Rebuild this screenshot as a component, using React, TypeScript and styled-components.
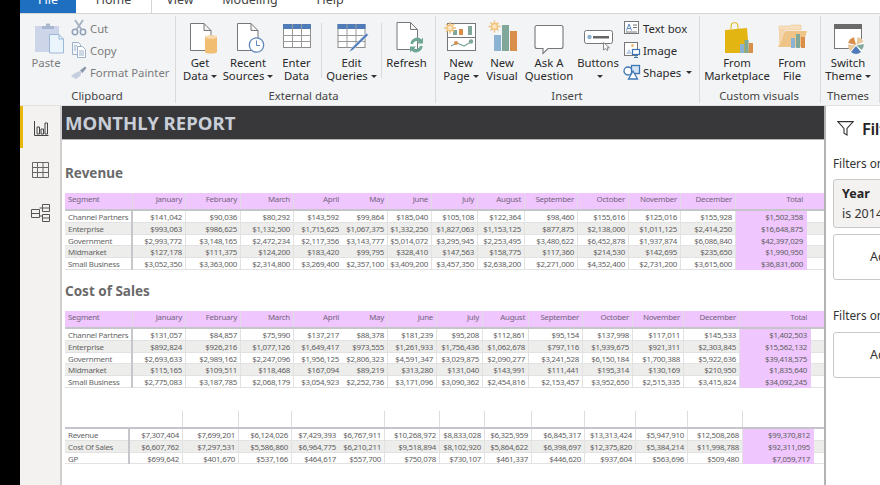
import React from "react";
import styled, { createGlobalStyle } from "styled-components";

const Global = createGlobalStyle`
  html, body { margin: 0; padding: 0; background: #000; }
  #root { width: 880px; height: 485px; overflow: hidden; }
  * { box-sizing: border-box; }
`;

const FONT = `"Noto Sans", "Open Sans", sans-serif`;

const Shell = styled.div`
  width: 880px; height: 485px; overflow: hidden;
  padding-left: 20px; background: #000;
  font-family: ${FONT}; display: flex; flex-direction: column;
`;
const TabBar = styled.div`
  height: 14px; flex: none; display: flex; align-items: flex-end; overflow: hidden;
  background: #fff; border-bottom: 1px solid #d4d4d4;
`;
const Tab = styled.div<{ $w: number; $kind?: "file" | "active" }>`
  flex: 0 0 ${p => p.$w}px; height: 22px; margin-bottom: -1px; text-align: center;
  font-size: 12.5px; line-height: 16px;
  color: ${p => (p.$kind === "file" ? "#fff" : "#444")};
  background: ${p => (p.$kind === "file" ? "#1e6fc0" : "#fff")};
  border-right: ${p => (p.$kind === "active" ? "1px solid #d4d4d4" : "none")};
`;
const Ribbon = styled.div`
  height: 92px; flex: none; display: flex; padding: 2px 0 2px;
  background: #f3f4f6; border-bottom: 1px solid #e2e2e2;
`;
const Group = styled.section<{ $w: number; $pl?: number }>`
  flex: 0 0 ${p => p.$w}px; display: flex; flex-direction: column;
  border-right: 1px solid #dadada; padding-left: ${p => p.$pl ?? 0}px;
`;
const GroupBody = styled.div`
  flex: 1; display: flex; align-items: flex-start;
`;
const GroupLabel = styled.div<{ $shift?: number }>`
  height: 14px; line-height: 14px; font-size: 11.3px; color: #444; text-align: center;
  margin-left: ${p => p.$shift ?? 0}px;
`;
const BigButton = styled.div<{ $w: number; $muted?: boolean }>`
  flex: 0 0 ${p => p.$w}px; width: ${p => p.$w}px; padding-top: 4px;
  display: flex; flex-direction: column; align-items: center;
  font-size: 11.3px; line-height: 13px; text-align: center;
  color: ${p => (p.$muted ? "#7b7b7b" : "#2a2a2a")};
  svg { display: block; }
`;
const ButtonLabel = styled.div`
  white-space: nowrap;
`;
const Caret = styled.span`
  display: inline-block; width: 0; height: 0; margin-left: 3px; vertical-align: 2px;
  border-left: 3px solid transparent; border-right: 3px solid transparent; border-top: 3px solid #333;
`;
const Divider = styled.div`
  flex: 0 0 1px; height: 55px; margin-top: 7px; background: #dadada;
`;
const SmallColumn = styled.div<{ $ml?: number }>`
  display: flex; flex-direction: column; padding-top: 1px; margin-left: ${p => p.$ml ?? 0}px;
`;
const SmallItem = styled.div<{ $muted?: boolean }>`
  display: flex; align-items: center; gap: 2px; height: 22px; white-space: nowrap;
  font-size: 11.3px; color: ${p => (p.$muted ? "#7b7b7b" : "#2a2a2a")};
`;
const Main = styled.div`
  flex: 1; display: flex; min-height: 0;
`;
const Sidebar = styled.nav`
  flex: 0 0 42px; background: #f3f2f1; border-right: 2px solid #cfcfcf;
  display: flex; flex-direction: column;
`;
const NavItem = styled.div<{ $active?: boolean }>`
  height: 42px; display: flex; align-items: center; justify-content: center;
  border-left: 3px solid ${p => (p.$active ? "#e8b70b" : "transparent")};
  padding: 2px 2px 0 0;
`;
const Canvas = styled.main`
  flex: 0 0 762px; background: #fff; display: flex; flex-direction: column;
`;
const Banner = styled.header`
  height: 34px; flex: none; background: #38383a; border-bottom: 1px solid #b5b5b5;
  padding-left: 3px; font-size: 18.6px; font-weight: 700; line-height: 34px; color: #c9ced8;
`;
const Report = styled.div`
  padding-left: 3px;
`;
const SectionTitle = styled.h2<{ $mt: number }>`
  margin: ${p => p.$mt}px 0 11px; height: 18px; font-size: 13.5px; line-height: 18px;
  font-weight: 700; color: #6a6a6a;
`;
const Grid = styled.div<{ $mt?: number }>`
  margin-top: ${p => p.$mt ?? 0}px; font-size: 7.9px; letter-spacing: -0.25px; color: #5e5e5e;
`;
const HeadRow = styled.div<{ $cols: string; $plain?: boolean }>`
  display: grid; grid-template-columns: ${p => p.$cols}; height: 18px;
  background: ${p => (p.$plain ? "#fff" : "#efc6fd")};
  border-bottom: 2px solid #c4c4ca;
`;
const HeadCell = styled.div<{ $left?: boolean; $bare?: boolean }>`
  text-align: ${p => (p.$left ? "left" : "right")}; line-height: 12px; padding: 0 3px;
  color: #75657d; white-space: nowrap;
  border-right: 1px solid ${p => (p.$bare ? "transparent" : "#e0dae2")};
`;
const DataRow = styled.div<{ $cols: string; $shade?: boolean }>`
  display: grid; grid-template-columns: ${p => p.$cols}; height: 11.8px;
  background: ${p => (p.$shade ? "#ededeb" : "#fff")};
  box-shadow: inset 0 -1px 0 #e2e2e2;
`;
const SegCell = styled.div`
  padding-left: 3px; line-height: 13px; height: 11.8px; white-space: nowrap; overflow: hidden;
  border-right: 2px solid #c6c6cb; color: #666;
`;
const ValueCell = styled.div<{ $total?: boolean; $bare?: boolean }>`
  text-align: right; line-height: 13px; height: 11.8px; padding-right: 3px; white-space: nowrap;
  background: ${p => (p.$total ? "#efc6fd" : "transparent")};
  border-right: 1px solid ${p => (p.$total || p.$bare ? "transparent" : "#e2e2e2")};
`;
const Panel = styled.aside`
  flex: 0 0 280px; background: #fff; border-left: 2px solid #b3b3b3; padding-left: 7px;
  color: #333;
`;
const PanelTitle = styled.div`
  display: flex; align-items: center; gap: 8px; height: 34px; margin-top: 5px; padding-left: 4px;
  font-size: 16.5px; font-weight: 600; letter-spacing: -0.4px; color: #252525;
`;
const PanelHeading = styled.div<{ $mt: number }>`
  margin-top: ${p => p.$mt}px; height: 18px; line-height: 18px; font-size: 11.8px; color: #333;
`;
const FilterCard = styled.div`
  margin-top: 7px; width: 230px; height: 49px; padding: 4px 8px;
  background: #f3f2f1; border: 1px solid #c8c8c8; border-radius: 3px;
  font-size: 12.5px; line-height: 20px; color: #333;
  b { display: block; font-weight: 700; color: #252525; }
`;
const AddCard = styled.div<{ $mt: number }>`
  margin-top: ${p => p.$mt}px; width: 230px; height: 46px; line-height: 44px; padding-left: 36px;
  background: #fff; border: 1px solid #c8c8c8; border-radius: 3px;
  font-size: 12.5px; color: #333; white-space: nowrap;
`;

const Icon36 = ({ children }: { children: React.ReactNode }) => (
  <svg width="36" height="36" viewBox="0 0 36 36" fill="none">{children}</svg>
);
const Icon18 = ({ children }: { children: React.ReactNode }) => (
  <svg width="18" height="18" viewBox="0 0 18 18" fill="none">{children}</svg>
);
const Doc = ({ x = 8, y = 3, bottom = 31 }: { x?: number; y?: number; bottom?: number }) => (
  <path d={`M${x + .5} ${y + .5}H${x + 14}L${x + 21} ${y + 7.5}V${bottom - .5}H${x + .5}ZM${x + 14} ${y + .5}V${y + 7.5}H${x + 21}`} fill="#fff" stroke="#777" />
);
const Sun = ({ x, y }: { x: number; y: number }) => (
  <g stroke="#f0c27b" strokeWidth="1.3">
    <path d={`M${x} ${y - 6}V${y + 6}M${x - 6} ${y}H${x + 6}M${x - 4} ${y - 4}L${x + 4} ${y + 4}M${x - 4} ${y + 4}L${x + 4} ${y - 4}`} />
    <circle cx={x} cy={y} r="3" fill="#fbe6c4" />
  </g>
);

const PasteIcon = () => (
  <Icon36>
    <rect x="7" y="6" width="24" height="26" fill="#cdd6e8" />
    <path d="M14 6h4v-2.500h4V6h4v3H14z" fill="#a9b6cf" />
    <path d="M21.500 14.500H31l4.500 4.500v14H21.500z" fill="#eaf4fc" stroke="#9db8d6" />
    <path d="M31 14.500V19h4.500" stroke="#9db8d6" />
  </Icon36>
);
const CutIcon = () => (
  <Icon18>
    <circle cx="5" cy="13" r="2.700" stroke="#8fa2ba" strokeWidth="1.500" />
    <circle cx="13" cy="13" r="2.700" stroke="#8fa2ba" strokeWidth="1.500" />
    <path d="M6.500 10.500L13 1M11.500 10.500L5 1" stroke="#a6b2c2" strokeWidth="1.800" />
  </Icon18>
);
const CopyIcon = () => (
  <Icon18>
    <path d="M2.500 1.500h6l2 2v10h-8z" fill="#f3f6fb" stroke="#9db0c8" />
    <path d="M7.500 5.500h5l3 3v8h-8z" fill="#fff" stroke="#9db0c8" />
    <path d="M9 10h5M9 12h5M9 14h5M4 5h3M4 7h2M4 9h2" stroke="#9db0c8" />
  </Icon18>
);
const BrushIcon = () => (
  <Icon18>
    <path d="M10 8l-6 2.500-3 3 2 1 1.500-.5-.5 1.500 2.500.5 4-3.500 1-3z" fill="#c5cfe0" />
    <path d="M10 7.500l2.500 2.500 4-5-1.500-1.500z" fill="#8b98ab" />
  </Icon18>
);
const GetDataIcon = () => (
  <Icon36>
    <Doc />
    <path d="M23 17c0-2 12-2 12 0v15c0 2-12 2-12 0z" fill="#f0bd72" />
    <ellipse cx="29" cy="17" rx="6" ry="1.800" fill="#f8dcaf" />
  </Icon36>
);
const RecentIcon = () => (
  <Icon36>
    <Doc x={7} />
    <circle cx="26.500" cy="25" r="7.200" fill="#fff" stroke="#5d87bb" strokeWidth="1.300" />
    <path d="M26.500 20.500V25.500H30" stroke="#5d87bb" />
  </Icon36>
);
const Sheet = ({ x, y, w = 28, h = 24 }: { x: number; y: number; w?: number; h?: number }) => (
  <g>
    <rect x={x + .5} y={y + .5} width={w - 1} height={h - 1} fill="#fff" stroke="#8d8d8d" />
    <rect x={x} y={y} width={w} height="5" fill="#4f7cb8" />
    <path d={`M${x} ${y + 11.500}H${x + w}M${x} ${y + 17.500}H${x + w}M${x + 9.500} ${y}V${y + h}M${x + 18.500} ${y}V${y + h}`} stroke="#9a9a9a" />
  </g>
);
const EnterIcon = () => <Icon36><Sheet x={4} y={4} /></Icon36>;
const EditIcon = () => (
  <Icon36>
    <Sheet x={3.500} y={4} />
    <path d="M32.500 13l-15 15-3 4.500 4.500-2.500 15.500-15z" fill="#4f7cb8" stroke="#fff" strokeWidth=".6" />
  </Icon36>
);
const RefreshIcon = () => (
  <Icon36>
    <Doc x={7.500} y={2} bottom={30} />
    <path d="M21.500 24a6.500 6.500 0 0 1 11-4.500l1.500-2v6h-6l2-1.800a4 4 0 0 0-6 2.300z" fill="#6fa593" />
    <path d="M33.500 26a6.500 6.500 0 0 1-11 4.500l-1.500 2v-6h6l-2 1.800a4 4 0 0 0 6-2.300z" fill="#6fa593" />
  </Icon36>
);
const NewPageIcon = () => (
  <Icon36>
    <rect x="4.500" y="3.500" width="28" height="27" fill="#fff" stroke="#777" />
    <path d="M4 17.500H33" stroke="#777" />
    <rect x="16" y="9" width="4" height="6" fill="#d98f4b" />
    <rect x="25" y="6" width="4" height="9" fill="#7fa89b" />
    <rect x="10" y="10" width="4" height="5" fill="#7fa89b" />
    <path d="M8 26l6-3 7 3 7-4" stroke="#7fa89b" strokeWidth="1.200" />
    <circle cx="13" cy="23" r="2" fill="#d98f4b" />
    <circle cx="28" cy="21.500" r="2.200" fill="#7fa89b" />
    <Sun x={7} y={8} />
  </Icon36>
);
const NewVisualIcon = () => (
  <Icon36>
    <rect x="10" y="15" width="7" height="16" fill="#8bb1d3" />
    <rect x="18" y="5" width="7" height="26" fill="#7fa89b" />
    <rect x="26" y="11" width="7" height="20" fill="#d98f4b" />
    <Sun x={10.500} y={6.500} />
  </Icon36>
);
const AskIcon = () => (
  <Icon36>
    <path d="M6 5.500h24a2 2 0 0 1 2 2v19a2 2 0 0 1-2 2H17l-5 5v-5H6a2 2 0 0 1-2-2v-19a2 2 0 0 1 2-2z" fill="#fff" stroke="#777" strokeWidth="1.100" />
  </Icon36>
);
const ButtonsIcon = () => (
  <Icon36>
    <rect x="4.500" y="10.500" width="28" height="13" rx="2" fill="#fff" stroke="#777" />
    <circle cx="9.500" cy="17" r="2.200" fill="#8bb1d3" />
    <rect x="13" y="16" width="16" height="2.500" fill="#666" />
    <path d="M23.500 22.500v7.500l2-1.500 1.500 2 1-.5-1-2.200h2.500z" fill="#fff" stroke="#888" />
  </Icon36>
);
const MarketIcon = () => (
  <Icon36>
    <path d="M12 9V6a3.500 3.500 0 0 1 7 0v3" stroke="#e3b512" strokeWidth="1" />
    <path d="M6 10l22-2 2 25H6z" fill="#e3b512" />
    <rect x="21" y="24" width="4" height="9" fill="#8bb1d3" />
    <rect x="25.500" y="20" width="4" height="13" fill="#7fa89b" />
    <rect x="30" y="23" width="4" height="10" fill="#d98f4b" />
  </Icon36>
);
const FolderIcon = () => (
  <Icon36>
    <path d="M5 6h10l3-1h9v5H5z" fill="#f7dfbd" stroke="#eccb9a" strokeWidth=".6" />
    <path d="M4 27L11 11h22l-5 16z" fill="#efc488" />
    <path d="M5 27V9h6L8 20z" fill="#f5d6aa" />
    <rect x="17" y="18" width="4" height="10" fill="#8bb1d3" />
    <rect x="22" y="14" width="4" height="14" fill="#7fa89b" />
    <rect x="27" y="17" width="4" height="11" fill="#d98f4b" />
  </Icon36>
);
const ThemeIcon = () => (
  <Icon36>
    <rect x="4.500" y="4.500" width="27" height="24" fill="#fff" stroke="#777" />
    <rect x="4" y="4" width="28" height="5" fill="#6a6a6a" />
    <circle cx="26" cy="25" r="8" fill="#fff" />
    <path d="M26 25l-7.800-2a8 8 0 0 1 5.800-5.800z" fill="#d98f4b" />
    <path d="M26.500 25l1-7.800a8 8 0 0 1 6 4.800z" fill="#e8c79d" />
    <path d="M26.500 25.500l7.300-1.500a8 8 0 0 1-2 6z" fill="#7fa89b" />
    <path d="M26 26l5 6a8 8 0 0 1-10 0z" fill="#4f7cb8" />
    <path d="M25.500 25.500l-5 5.500a8 8 0 0 1-2.500-6.500z" fill="#e8c79d" />
  </Icon36>
);
const TextBoxIcon = () => (
  <Icon18>
    <rect x="1.500" y="2.500" width="14" height="12" fill="#fff" stroke="#777" />
    <path d="M3.500 11.500L6 5l2.500 6.500M4.500 9.500h3" stroke="#5d87bb" />
    <path d="M10 6h4M10 8.500h4M3 13h11" stroke="#777" />
  </Icon18>
);
const ImageIcon = () => (
  <Icon18>
    <rect x="1.500" y="1.500" width="13" height="13" fill="#fff" stroke="#777" />
    <circle cx="9.500" cy="4.500" r="1.500" fill="#f0bd72" />
    <path d="M3 13l3-5 3 5z" fill="#b9d0e6" />
    <rect x="9.500" y="8.500" width="7" height="5" fill="#fff" stroke="#3e76b4" strokeWidth="1.200" />
    <path d="M11 16.500h4M13 13.500v3" stroke="#3e76b4" />
  </Icon18>
);
const ShapesIcon = () => (
  <Icon18>
    <circle cx="5" cy="8" r="4" fill="#fff" stroke="#3e76b4" strokeWidth="1.300" />
    <rect x="8.500" y="2.500" width="8" height="8" fill="#d5e4f2" stroke="#3e76b4" strokeWidth="1.300" />
    <path d="M10 8l4.500 8h-9z" fill="#fff" stroke="#3e76b4" strokeWidth="1.300" />
  </Icon18>
);
const ReportNavIcon = () => (
  <svg width="16" height="15" viewBox="0 0 16 15" fill="none" stroke="#444">
    <path d="M1.500 0v14.500H15.500M4 13V6h2.500v7zM8 13V8h2.500v5zM12 13V2h2.500v11z" />
  </svg>
);
const DataNavIcon = () => (
  <svg width="17" height="16" viewBox="0 0 17 16" fill="none" stroke="#666">
    <path d="M.5.5h16v15H.5zM.5 5.500h16M.5 10.500h16M5.500.5v15M11 .5v15" />
  </svg>
);
const ModelNavIcon = () => (
  <svg width="19" height="19" viewBox="0 0 19 19" fill="none" stroke="#555">
    <path d="M.5 6.500h8v8h-8zM.5 10.500h8M11.500 1.500h7v7h-7zM11.500 5h7M11.500 11.500h7v7h-7zM11.500 15h7M8.500 5h3M8.500 13h3" />
  </svg>
);
const FunnelIcon = () => (
  <svg width="17" height="15" viewBox="0 0 17 15" fill="none" stroke="#333" strokeWidth="1.100">
    <path d="M.8.6h15.400L10 7.500v6.500l-3-1.800V7.500z" />
  </svg>
);

const toCols = (edges: number[]) => edges.slice(1).map((e, i) => `${e - edges[i]}px`).join(" ");

const MONTHS = ["January", "February", "March", "April", "May", "June", "July", "August", "September", "October", "November", "December", "Total"];

type Row = [string, ...string[]];
const revenue: Row[] = [
  ["Channel Partners", "$141,042", "$90,036", "$80,292", "$143,592", "$99,864", "$185,040", "$105,108", "$122,364", "$98,460", "$155,616", "$125,016", "$155,928", "$1,502,358"],
  ["Enterprise", "$993,063", "$986,625", "$1,132,500", "$1,715,625", "$1,067,375", "$1,332,250", "$1,827,063", "$1,153,125", "$877,875", "$2,138,000", "$1,011,125", "$2,414,250", "$16,648,875"],
  ["Government", "$2,993,772", "$3,148,165", "$2,472,234", "$2,117,356", "$3,143,777", "$5,014,072", "$3,295,945", "$2,253,495", "$3,480,622", "$6,452,878", "$1,937,874", "$6,086,840", "$42,397,029"],
  ["Midmarket", "$127,178", "$111,375", "$124,200", "$183,420", "$99,795", "$328,410", "$147,563", "$158,775", "$117,360", "$214,530", "$142,695", "$235,650", "$1,990,950"],
  ["Small Business", "$3,052,350", "$3,363,000", "$2,314,800", "$3,269,400", "$2,357,100", "$3,409,200", "$3,457,350", "$2,638,200", "$2,271,000", "$4,352,400", "$2,731,200", "$3,615,600", "$36,831,600"],
];
const cost: Row[] = [
  ["Channel Partners", "$131,057", "$84,857", "$75,990", "$137,217", "$88,378", "$181,239", "$95,208", "$112,861", "$95,154", "$137,998", "$117,011", "$145,533", "$1,402,503"],
  ["Enterprise", "$892,824", "$926,216", "$1,077,126", "$1,649,417", "$973,555", "$1,261,933", "$1,756,436", "$1,062,678", "$797,116", "$1,939,675", "$921,311", "$2,303,845", "$15,562,132"],
  ["Government", "$2,693,633", "$2,989,162", "$2,247,096", "$1,956,125", "$2,806,323", "$4,591,347", "$3,029,875", "$2,090,277", "$3,241,528", "$6,150,184", "$1,700,388", "$5,922,636", "$39,418,575"],
  ["Midmarket", "$115,165", "$109,511", "$118,468", "$167,094", "$89,219", "$313,280", "$131,040", "$143,991", "$111,441", "$195,314", "$130,169", "$210,950", "$1,835,640"],
  ["Small Business", "$2,775,083", "$3,187,785", "$2,068,179", "$3,054,923", "$2,252,736", "$3,171,096", "$3,090,362", "$2,454,816", "$2,153,457", "$3,952,650", "$2,515,335", "$3,415,824", "$34,092,245"],
];
const summary: Row[] = [
  ["Revenue", "$7,307,404", "$7,699,201", "$6,124,026", "$7,429,393", "$6,767,911", "$10,268,972", "$8,833,028", "$6,325,959", "$6,845,317", "$13,313,424", "$5,947,910", "$12,508,268", "$99,370,812"],
  ["Cost Of Sales", "$6,607,762", "$7,297,531", "$5,586,860", "$6,964,775", "$6,210,211", "$9,518,894", "$8,102,920", "$5,864,622", "$6,398,697", "$12,375,820", "$5,384,214", "$11,998,788", "$92,311,095"],
  ["GP", "$699,642", "$401,670", "$537,166", "$464,617", "$557,700", "$750,078", "$730,107", "$461,337", "$446,620", "$937,604", "$563,696", "$509,480", "$7,059,717"],
];

const DataTable = ({ edges, rows, plain, mt }: { edges: number[]; rows: Row[]; plain?: boolean; mt?: number }) => {
  const cols = toCols(edges);
  return (
    <Grid $mt={mt}>
      <HeadRow $cols={cols} $plain={plain}>
        <HeadCell $left $bare={plain}>{plain ? "" : "Segment"}</HeadCell>
        {MONTHS.map((m, i) => (
          <HeadCell key={m} $bare={i === 3 || i === 12}>{plain ? "" : m}</HeadCell>
        ))}
      </HeadRow>
      {rows.map((r, ri) => (
        <DataRow key={r[0]} $cols={cols} $shade={ri % 2 === 1}>
          <SegCell>{r[0]}</SegCell>
          {r.slice(1).map((v, i) => (
            <ValueCell key={i} $total={i === 12} $bare={i === 3}>{v}</ValueCell>
          ))}
        </DataRow>
      ))}
    </Grid>
  );
};

const Big = ({ w, icon, lines, caret, muted }: { w: number; icon: React.ReactNode; lines: string[]; caret?: boolean; muted?: boolean }) => (
  <BigButton $w={w} $muted={muted}>
    {icon}
    <ButtonLabel>
      {lines.map((l, i) => (
        <div key={i}>
          {l}
          {caret && i === lines.length - 1 && <Caret />}
        </div>
      ))}
    </ButtonLabel>
  </BigButton>
);

export default function App() {
  return (
    <Shell>
      <Global />
      <TabBar>
        <Tab $w={56} $kind="file">File</Tab>
        <Tab $w={76} $kind="active">Home</Tab>
        <Tab $w={56}>View</Tab>
        <Tab $w={84}>Modeling</Tab>
        <Tab $w={76}>Help</Tab>
      </TabBar>
      <Ribbon>
        <Group $w={156} $pl={2}>
          <GroupBody>
            <Big w={48} icon={<PasteIcon />} lines={["Paste"]} muted />
            <SmallColumn>
              <SmallItem $muted><CutIcon />Cut</SmallItem>
              <SmallItem $muted><CopyIcon />Copy</SmallItem>
              <SmallItem $muted><BrushIcon />Format Painter</SmallItem>
            </SmallColumn>
          </GroupBody>
          <GroupLabel $shift={-3}>Clipboard</GroupLabel>
        </Group>
        <Group $w={260}>
          <GroupBody>
            <Big w={48} icon={<GetDataIcon />} lines={["Get", "Data"]} caret />
            <Big w={48} icon={<RecentIcon />} lines={["Recent", "Sources"]} caret />
            <Big w={49} icon={<EnterIcon />} lines={["Enter", "Data"]} />
            <Divider />
            <Big w={59} icon={<EditIcon />} lines={["Edit", "Queries"]} caret />
            <Divider />
            <Big w={49} icon={<RefreshIcon />} lines={["Refresh"]} />
          </GroupBody>
          <GroupLabel $shift={-4}>External data</GroupLabel>
        </Group>
        <Group $w={264} $pl={5}>
          <GroupBody>
            <Big w={40} icon={<NewPageIcon />} lines={["New", "Page"]} caret />
            <Big w={42} icon={<NewVisualIcon />} lines={["New", "Visual"]} />
            <Big w={52} icon={<AskIcon />} lines={["Ask A", "Question"]} />
            <BigButton $w={46}>
              <ButtonsIcon />
              <ButtonLabel>Buttons<div><Caret /></div></ButtonLabel>
            </BigButton>
            <SmallColumn $ml={2}>
              <SmallItem><TextBoxIcon />Text box</SmallItem>
              <SmallItem><ImageIcon />Image</SmallItem>
              <SmallItem><ShapesIcon />Shapes<Caret /></SmallItem>
            </SmallColumn>
          </GroupBody>
          <GroupLabel $shift={-6}>Insert</GroupLabel>
        </Group>
        <Group $w={121}>
          <GroupBody>
            <Big w={74} icon={<MarketIcon />} lines={["From", "Marketplace"]} />
            <Big w={36} icon={<FolderIcon />} lines={["From", "File"]} />
          </GroupBody>
          <GroupLabel $shift={-2}>Custom visuals</GroupLabel>
        </Group>
        <Group $w={59}>
          <GroupBody>
            <Big w={54} icon={<ThemeIcon />} lines={["Switch", "Theme"]} caret />
          </GroupBody>
          <GroupLabel $shift={-4}>Themes</GroupLabel>
        </Group>
      </Ribbon>
      <Main>
        <Sidebar>
          <NavItem $active><ReportNavIcon /></NavItem>
          <NavItem><DataNavIcon /></NavItem>
          <NavItem><ModelNavIcon /></NavItem>
        </Sidebar>
        <Canvas>
          <Banner>MONTHLY REPORT</Banner>
          <Report>
            <SectionTitle $mt={24}>Revenue</SectionTitle>
            <DataTable edges={[65, 133, 186, 241, 294, 343, 388, 432, 478, 525, 578, 629, 681, 736, 807]} rows={revenue} />
            <SectionTitle $mt={12}>Cost of Sales</SectionTitle>
            <DataTable edges={[65, 133, 186, 241, 294, 343, 388, 437, 483, 529, 583, 633, 684, 740, 811]} rows={cost} />
            <DataTable mt={23} plain edges={[65, 130, 183, 239, 292, 340, 385, 440, 485, 532, 585, 636, 688, 743, 814]} rows={summary} />
          </Report>
        </Canvas>
        <Panel>
          <PanelTitle><FunnelIcon />Filters</PanelTitle>
          <PanelHeading $mt={9}>Filters on this page</PanelHeading>
          <FilterCard><b>Year</b>is 2014</FilterCard>
          <AddCard $mt={6}>Add data fields here</AddCard>
          <PanelHeading $mt={26}>Filters on all pages</PanelHeading>
          <AddCard $mt={8}>Add data fields here</AddCard>
        </Panel>
      </Main>
    </Shell>
  );
}
